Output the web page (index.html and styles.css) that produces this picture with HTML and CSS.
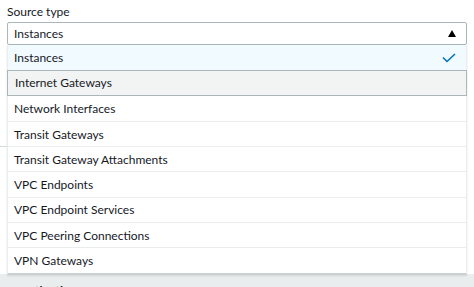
FILE: index.html
```html
<!doctype html>
<html lang="en">
  <head>
    <meta charset="UTF-8" />
    <title>Source type</title>
    <link rel="stylesheet" href="styles.css">
  </head>
  <body>
    <div class="form-page">
      <div class="field">
        <label class="field-label">Source type</label>
        <div class="select-wrap">
          <div class="select-box">
            <span>Instances</span>
            <span class="caret"></span>
          </div>
          <ul class="select-menu">
            <li class="option selected">
              Instances
              <svg class="check" width="14" height="10" viewBox="0 0 14 10">
                <path d="M1 4.5 L5 8.5 L13 1" fill="none" stroke="#0073bb" stroke-width="1.6" />
              </svg>
            </li>
            <li class="option hover">Internet Gateways</li>
            <li class="option">Network Interfaces</li>
            <li class="option">Transit Gateways</li>
            <li class="option">Transit Gateway Attachments</li>
            <li class="option">VPC Endpoints</li>
            <li class="option">VPC Endpoint Services</li>
            <li class="option">VPC Peering Connections</li>
            <li class="option">VPN Gateways</li>
          </ul>
          <div class="behind-line"></div>
        </div>
      </div>
      <div class="next-section">
        <span>Destination</span>
      </div>
    </div>
  </body>
</html>
```

FILE: styles.css
```css
:root {
  --text-dark: #16191f;
  --border-gray: #aab7b8;
  --line-light: #eaeded;
  --selected-bg: #f1faff;
  --hover-bg: #f2f3f3;
  --blue: #0073bb;
}

* {
  box-sizing: border-box;
  font-family: "Lato", "Open Sans", sans-serif;
}

html,
body {
  height: 100%;
  overflow: hidden;
}

body {
  margin: 0;
  background: #fff;
  color: var(--text-dark);
}

.form-page {
  padding-top: 3px;
}

.field {
  padding: 0 7px;
}

.field-label {
  display: block;
  font-size: 12px;
  line-height: 17px;
  color: var(--text-dark);
  margin-bottom: 2px;
}

.select-wrap {
  position: relative;
}

.select-box {
  height: 23px;
  border: 1px solid var(--border-gray);
  border-radius: 2px;
  display: flex;
  align-items: center;
  justify-content: space-between;
  padding: 0 10px 0 6px;
  font-size: 12px;
}

.caret {
  width: 0;
  height: 0;
  border-left: 4px solid transparent;
  border-right: 4px solid transparent;
  border-bottom: 7px solid #000;
}

.select-menu {
  list-style: none;
  margin: 0;
  padding: 0;
  position: absolute;
  top: 23px;
  left: 0;
  right: 0;
  z-index: 2;
  background: #fff;
  border: 1px solid var(--line-light);
  border-top: none;
  border-bottom: 2px solid #c9d0d0;
  box-shadow: 0 1px 2px rgba(0, 0, 0, 0.1);
}

.option {
  height: 25.3px;
  display: flex;
  align-items: center;
  justify-content: space-between;
  padding: 0 10px 0 6px;
  font-size: 12px;
  border-top: 1px solid var(--line-light);
}

.option:first-child {
  border-top: none;
}

.option.selected {
  background: var(--selected-bg);
}

.option.hover {
  background: var(--hover-bg);
  border: 1px solid var(--border-gray);
  margin: 0 -1px;
  padding-left: 7px;
}

.option.hover + .option {
  border-top: none;
}

.behind-line {
  position: absolute;
  left: -7px;
  width: 7px;
  top: 124px;
  border-top: 1px solid #d5dbdb;
}

.next-section {
  margin-top: 229px;
  height: 40px;
  background: var(--line-light);
  padding: 9px 14px;
  font-size: 12px;
  font-weight: bold;
}
```
